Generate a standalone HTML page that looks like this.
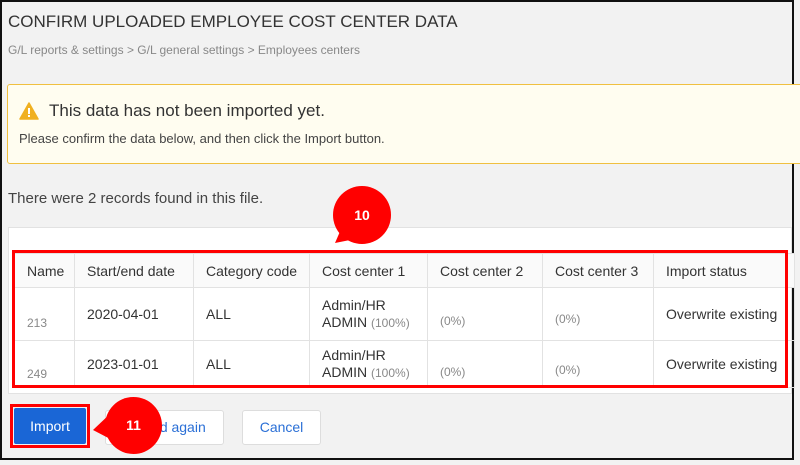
<!DOCTYPE html><html><head><style>
body{margin:0;width:800px;height:465px;background:#f2f2f2;font-family:"Liberation Sans",sans-serif;position:relative;overflow:hidden}
.a{position:absolute;white-space:nowrap}
.frame{position:absolute;left:0;top:0;width:790px;height:456px;border:2px solid #111;background:#f2f2f2}
td,th{border:1px solid #e2e2e2;font-weight:normal;font-size:14px;color:#333;text-align:left;padding:0 0 0 12px}
table{border-collapse:collapse;position:absolute;left:14px;top:253px}
.g{color:#888;font-size:12px}
.btn{position:absolute;background:#fff;border:1px solid #ddd;border-radius:3px;color:#2a6fd6;font-size:14px;text-align:center;line-height:33px}
.circ{position:absolute;border-radius:50%;background:#f00;color:#fff;font-weight:bold;font-size:14px;text-align:center}
</style></head><body>
<div class="frame"></div>
<div class="a" style="left:8px;top:12px;font-size:17px;color:#333">CONFIRM UPLOADED EMPLOYEE COST CENTER DATA</div>
<div class="a" style="left:8px;top:43px;font-size:12px;color:#888">G/L reports &amp; settings &gt; G/L general settings &gt; Employees centers</div>
<div class="a" style="left:7px;top:84px;width:800px;height:78px;background:#fffdf0;border:1px solid #f0c040;border-radius:3px"></div>
<svg class="a" style="left:19px;top:102px" width="20" height="18" viewBox="0 0 20 18"><path d="M10 1L19 17H1Z" fill="#f0b020" stroke="#f0b020" stroke-linejoin="round" stroke-width="1.5"/><rect x="9" y="6" width="2" height="6" fill="#fff"/><rect x="9" y="13" width="2" height="2" fill="#fff"/></svg>
<div class="a" style="left:49px;top:101px;font-size:17px;color:#333">This data has not been imported yet.</div>
<div class="a" style="left:19px;top:131px;font-size:13px;color:#444">Please confirm the data below, and then click the Import button.</div>
<div class="a" style="left:8px;top:190px;font-size:15px;color:#444">There were 2 records found in this file.</div>
<div class="a" style="left:8px;top:227px;width:782px;height:165px;background:#fff;border:1px solid #e2e2e2"></div>
<table>
<tr style="height:34px;background:#fafafa"><th style="width:47px">Name</th><th style="width:106px">Start/end date</th><th style="width:103px">Category code</th><th style="width:105px">Cost center 1</th><th style="width:102px">Cost center 2</th><th style="width:98px">Cost center 3</th><th style="width:128px">Import status</th></tr>
<tr style="height:53px"><td class="g" style="vertical-align:bottom;padding-bottom:10px">213</td><td>2020-04-01</td><td>ALL</td><td style="line-height:17px">Admin/HR<br>ADMIN <span class="g">(100%)</span></td><td class="g" style="vertical-align:bottom;padding-bottom:12px">(0%)</td><td class="g" style="vertical-align:bottom;padding-bottom:14px">(0%)</td><td>Overwrite existing</td></tr>
<tr style="height:47px"><td class="g" style="vertical-align:bottom;padding-bottom:6px">249</td><td>2023-01-01</td><td>ALL</td><td style="line-height:17px">Admin/HR<br>ADMIN <span class="g">(100%)</span></td><td class="g" style="vertical-align:bottom;padding-bottom:8px">(0%)</td><td class="g" style="vertical-align:bottom;padding-bottom:10px">(0%)</td><td>Overwrite existing</td></tr>
</table>
<div class="a" style="left:12px;top:250px;width:770px;height:132px;border:3px solid #f00"></div>
<div class="btn" style="left:105px;top:410px;width:117px">Upload again</div>
<div class="btn" style="left:242px;top:410px;width:77px">Cancel</div>
<div class="a" style="left:10px;top:404px;width:74px;height:38px;border:3px solid #f00"></div>
<div class="a" style="left:14px;top:408px;width:72px;height:36px;background:#1a66d6;border-radius:2px;color:#fff;font-size:14px;text-align:center;line-height:36px">Import</div>
<svg class="a" style="left:0;top:0" width="800" height="465"><path d="M93 430L112 412L116 442Z" fill="#f00"/><path d="M335 243L345 220L370 236Z" fill="#f00"/></svg>
<div class="circ" style="left:105px;top:397px;width:57px;height:57px;line-height:57px">11</div>
<div class="circ" style="left:333px;top:186px;width:58px;height:58px;line-height:58px">10</div>
</body></html>
